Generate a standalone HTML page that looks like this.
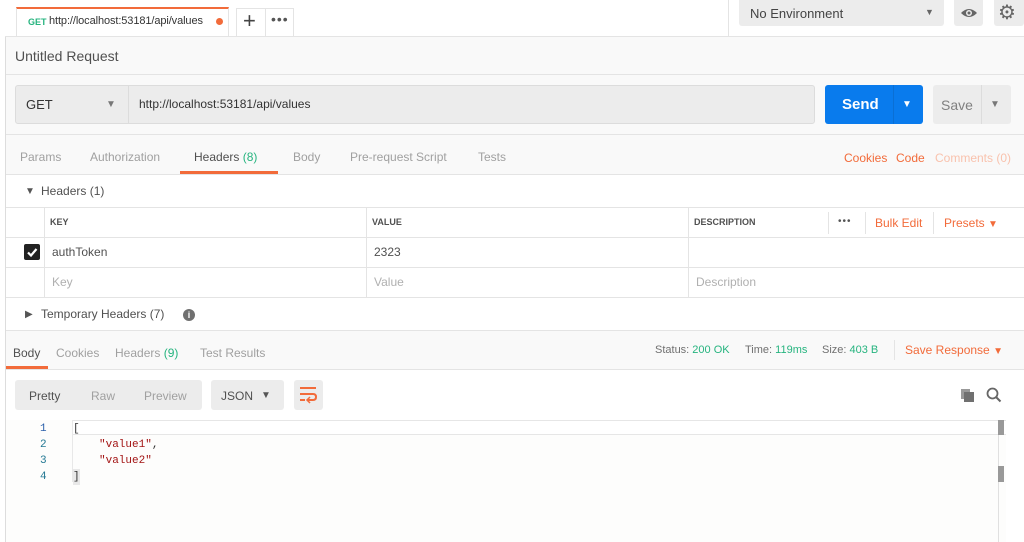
<!DOCTYPE html>
<html><head><meta charset="utf-8"><style>
*{margin:0;padding:0;box-sizing:border-box}
body{width:1024px;height:542px;overflow:hidden;background:#fff;font-family:"Liberation Sans",sans-serif;font-size:12px;color:#505050;position:relative}
.a{position:absolute}
.t{position:absolute;white-space:nowrap}
.or{color:#f26b3a}
.gr{color:#26b47f}
.lg{color:#a0a0a0}
.hl{position:absolute;height:1px;background:#e4e4e4}
.vl{position:absolute;width:1px;background:#e4e4e4}
.mono{font-family:"Liberation Mono",monospace}
</style></head><body>
<div class="vl" style="left:5px;top:37px;height:505px;background:#ddd"></div>
<!-- top bar -->
<div class="a" style="left:16px;top:7px;width:213px;height:30px;background:#fff;border-top:2px solid #f26b3a;border-left:1px solid #e4e4e4;border-right:1px solid #e4e4e4"></div>
<div class="t" style="left:28px;top:17px;font-size:9px;font-weight:bold;color:#26b47f">GET</div>
<div class="t" style="left:49px;top:15px;font-size:11px;color:#333;letter-spacing:-0.1px">http://localhost:53181/api/values</div>
<div class="a" style="left:216px;top:18px;width:7px;height:7px;border-radius:50%;background:#f26b3a"></div>
<div class="a" style="left:236px;top:8px;width:58px;height:29px;border:1px solid #e4e4e4;border-bottom:none"></div>
<div class="vl" style="left:265px;top:8px;height:29px"></div>
<div class="t" style="left:243px;top:8px;font-size:22px;color:#444;font-weight:300">+</div>
<div class="t" style="left:271px;top:11px;font-size:14px;color:#555;letter-spacing:1px">•••</div>
<div class="vl" style="left:728px;top:0;height:37px"></div>
<div class="a" style="left:739px;top:0;width:205px;height:26px;background:#ececec;border-radius:0 0 3px 3px"></div>
<div class="t" style="left:750px;top:6px;font-size:13px;color:#444">No Environment</div>
<div class="t" style="left:925px;top:7px;font-size:9px;color:#666">▼</div>
<div class="a" style="left:954px;top:0;width:29px;height:26px;background:#ececec;border-radius:0 0 3px 3px"></div>
<svg class="a" style="left:959px;top:5px" width="20" height="16" viewBox="0 0 20 16"><path d="M2 8 Q10 0 18 8 Q10 16 2 8Z" fill="#666"/><circle cx="10" cy="8" r="3" fill="#ececec"/><circle cx="10" cy="8" r="1.5" fill="#666"/></svg>
<div class="a" style="left:994px;top:0;width:30px;height:26px;background:#ececec;border-radius:0 0 3px 3px"></div>
<div class="t" style="left:998px;top:0px;font-size:20px;color:#666">⚙</div>
<div class="hl" style="left:5px;top:36px;width:1019px"></div>
<!-- request area -->
<div class="a" style="left:6px;top:37px;width:1018px;height:137px;background:#f9f9f9"></div>
<div class="t" style="left:15px;top:48px;font-size:14px;color:#505050">Untitled Request</div>
<div class="hl" style="left:6px;top:74px;width:1018px"></div>
<div class="a" style="left:15px;top:85px;width:800px;height:39px;background:#ececec;border:1px solid #dcdcdc;border-radius:3px"></div>
<div class="vl" style="left:128px;top:86px;height:37px;background:#dcdcdc"></div>
<div class="t" style="left:26px;top:97px;font-size:13px;color:#333">GET</div>
<div class="t" style="left:106px;top:99px;font-size:10px;color:#777">▼</div>
<div class="t" style="left:139px;top:97px;font-size:12px;color:#333">http://localhost:53181/api/values</div>
<div class="a" style="left:825px;top:85px;width:98px;height:39px;background:#097bed;border-radius:3px"></div>
<div class="vl" style="left:893px;top:85px;height:39px;background:#0a6fd4"></div>
<div class="t" style="left:842px;top:96px;font-size:15px;font-weight:bold;color:#fff">Send</div>
<div class="t" style="left:902px;top:99px;font-size:10px;color:#fff">▼</div>
<div class="a" style="left:933px;top:85px;width:78px;height:39px;background:#ececec;border-radius:3px"></div>
<div class="vl" style="left:981px;top:85px;height:39px;background:#dcdcdc"></div>
<div class="t" style="left:941px;top:97px;font-size:14px;color:#808080">Save</div>
<div class="t" style="left:990px;top:99px;font-size:10px;color:#777">▼</div>
<div class="hl" style="left:6px;top:134px;width:1018px"></div>
<div class="t lg" style="left:20px;top:150px;font-size:12px">Params</div>
<div class="t lg" style="left:90px;top:150px;font-size:12px">Authorization</div>
<div class="t" style="left:194px;top:150px;font-size:12px;color:#505050">Headers <span class="gr">(8)</span></div>
<div class="a" style="left:180px;top:171px;width:98px;height:3px;background:#f26b3a"></div>
<div class="t lg" style="left:293px;top:150px;font-size:12px">Body</div>
<div class="t lg" style="left:350px;top:150px;font-size:12px">Pre-request Script</div>
<div class="t lg" style="left:478px;top:150px;font-size:12px">Tests</div>
<div class="t or" style="left:844px;top:151px;font-size:12px">Cookies</div>
<div class="t or" style="left:896px;top:151px;font-size:12px">Code</div>
<div class="t" style="left:935px;top:151px;font-size:12px;color:#f9c2ad">Comments (0)</div>
<div class="hl" style="left:6px;top:174px;width:1018px"></div>
<!-- headers -->
<div class="t" style="left:25px;top:186px;font-size:10px;color:#555">▼</div>
<div class="t" style="left:41px;top:184px;font-size:12px;color:#505050">Headers (1)</div>
<div class="hl" style="left:6px;top:207px;width:1018px"></div>
<div class="hl" style="left:6px;top:237px;width:1018px"></div>
<div class="hl" style="left:6px;top:267px;width:1018px"></div>
<div class="hl" style="left:6px;top:297px;width:1018px"></div>
<div class="vl" style="left:44px;top:207px;height:90px"></div>
<div class="vl" style="left:366px;top:207px;height:90px"></div>
<div class="vl" style="left:688px;top:207px;height:90px"></div>
<div class="vl" style="left:828px;top:212px;height:22px"></div>
<div class="vl" style="left:865px;top:212px;height:22px"></div>
<div class="vl" style="left:933px;top:212px;height:22px"></div>
<div class="t" style="left:50px;top:217px;font-size:9px;font-weight:bold;color:#505050">KEY</div>
<div class="t" style="left:372px;top:217px;font-size:9px;font-weight:bold;color:#505050">VALUE</div>
<div class="t" style="left:694px;top:217px;font-size:9px;font-weight:bold;color:#505050">DESCRIPTION</div>
<div class="t" style="left:838px;top:216px;font-size:10px;color:#555;letter-spacing:1px">•••</div>
<div class="t or" style="left:875px;top:216px;font-size:12px">Bulk Edit</div>
<div class="t or" style="left:944px;top:216px;font-size:12px">Presets <span style="font-size:10px">▼</span></div>
<div class="a" style="left:24px;top:244px;width:16px;height:16px;background:#222;border-radius:2px"></div>
<svg class="a" style="left:24px;top:244px" width="16" height="16"><path d="M4 8.5 L7 11.5 L12.5 5" stroke="#fff" stroke-width="2.2" fill="none"/></svg>
<div class="t" style="left:52px;top:245px;font-size:12px;color:#505050">authToken</div>
<div class="t" style="left:374px;top:245px;font-size:12px;color:#505050">2323</div>
<div class="t" style="left:52px;top:275px;font-size:12px;color:#b0b0b0">Key</div>
<div class="t" style="left:374px;top:275px;font-size:12px;color:#b0b0b0">Value</div>
<div class="t" style="left:696px;top:275px;font-size:12px;color:#b0b0b0">Description</div>
<div class="t" style="left:25px;top:309px;font-size:10px;color:#555">▶</div>
<div class="t" style="left:41px;top:307px;font-size:12px;color:#505050">Temporary Headers (7)</div>
<div class="a" style="left:183px;top:309px;width:12px;height:12px;border-radius:50%;background:#707070;color:#fff;font-size:9px;font-weight:bold;text-align:center;line-height:12px">i</div>
<!-- response -->
<div class="a" style="left:6px;top:330px;width:1018px;height:40px;background:#f9f9f9;border-top:1px solid #e4e4e4;border-bottom:1px solid #e4e4e4"></div>
<div class="t" style="left:13px;top:346px;font-size:12px;color:#505050">Body</div>
<div class="a" style="left:6px;top:366px;width:42px;height:3px;background:#f26b3a"></div>
<div class="t lg" style="left:56px;top:346px;font-size:12px">Cookies</div>
<div class="t lg" style="left:115px;top:346px;font-size:12px">Headers <span class="gr">(9)</span></div>
<div class="t lg" style="left:200px;top:346px;font-size:12px">Test Results</div>
<div class="t" style="left:655px;top:344px;font-size:11px;color:#707070">Status: <span class="gr">200 OK</span></div>
<div class="t" style="left:745px;top:344px;font-size:11px;color:#707070">Time: <span class="gr">119ms</span></div>
<div class="t" style="left:822px;top:344px;font-size:11px;color:#707070">Size: <span class="gr">403 B</span></div>
<div class="vl" style="left:894px;top:340px;height:20px"></div>
<div class="t or" style="left:905px;top:343px;font-size:12px">Save Response <span style="font-size:10px">▼</span></div>
<div class="a" style="left:15px;top:380px;width:187px;height:30px;background:#ececec;border-radius:3px"></div>
<div class="t" style="left:29px;top:389px;font-size:12px;color:#505050">Pretty</div>
<div class="t lg" style="left:91px;top:389px;font-size:12px">Raw</div>
<div class="t lg" style="left:144px;top:389px;font-size:12px">Preview</div>
<div class="a" style="left:211px;top:380px;width:73px;height:30px;background:#ececec;border-radius:3px"></div>
<div class="t" style="left:221px;top:389px;font-size:12px;color:#505050">JSON</div>
<div class="t" style="left:261px;top:390px;font-size:10px;color:#555">▼</div>
<div class="a" style="left:294px;top:380px;width:29px;height:30px;background:#ececec;border-radius:3px"></div>
<svg class="a" style="left:299px;top:386px" width="19" height="18"><path d="M1 2H17M1 8H14Q17 8 17 11Q17 14 14 14H9M1 14H6" stroke="#f26b3a" stroke-width="2" fill="none"/><path d="M11 11L8 14L11 17" stroke="#f26b3a" stroke-width="1.5" fill="none"/></svg>
<div class="a" style="left:961px;top:389px;width:9px;height:10px;background:#999"></div>
<div class="a" style="left:964px;top:392px;width:10px;height:10px;background:#707070"></div>
<svg class="a" style="left:986px;top:387px" width="16" height="16"><circle cx="6.5" cy="6.5" r="5" stroke="#666" stroke-width="1.8" fill="none"/><path d="M10 10L14.5 14.5" stroke="#666" stroke-width="2"/></svg>
<!-- code -->
<div class="a" style="left:6px;top:420px;width:1000px;height:122px;background:#fdfdfc"></div>
<div class="a" style="left:72px;top:420px;width:934px;height:15px;background:#fff;border-top:1px solid #e6e6e6;border-bottom:1px solid #e6e6e6"></div>
<div class="vl" style="left:72px;top:420px;height:62px;background:#e8e8e8"></div>
<div class="vl" style="left:998px;top:420px;height:122px;background:#e0e0e0"></div>
<div class="a" style="left:998px;top:420px;width:6px;height:15px;background:#999"></div>
<div class="a" style="left:998px;top:466px;width:6px;height:16px;background:#999"></div>
<div class="t mono" style="left:40px;top:421px;font-size:11px;line-height:16px;color:#2a5faa">1</div>
<div class="t mono" style="left:40px;top:437px;font-size:11px;line-height:16px;color:#237893">2<br>3<br>4</div>
<div class="t mono" style="left:73px;top:421px;font-size:11px;line-height:16px;color:#333">[</div>
<div class="t mono" style="left:99px;top:437px;font-size:11px;line-height:16px;color:#a31515">"value1"<span style="color:#333">,</span><br>"value2"</div>
<div class="t mono" style="left:73px;top:469px;font-size:11px;line-height:16px;color:#333;background:#e8e8e8">]</div>
</body></html>
